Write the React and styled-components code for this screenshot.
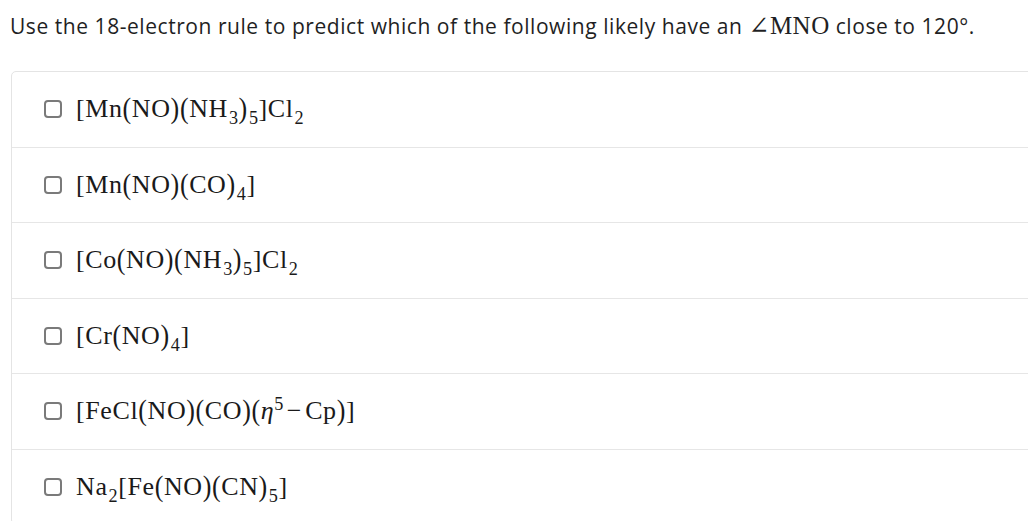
import React from "react";
import styled, { createGlobalStyle } from "styled-components";

const Global = createGlobalStyle`
  html, body { margin: 0; padding: 0; background: #fff; overflow: hidden; }
  body { font-family: "Open Sans", "Noto Sans", sans-serif; color: #1f1f24; }
`;

const Page = styled.div`
  padding: 11px 0 0 10px;
  width: 1060px;
`;

const Question = styled.div`
  font-size: 21px;
  line-height: 30px;
  letter-spacing: 0.55px;
  color: #1f1f24;
  margin: 0 0 30px 0;
  white-space: nowrap;
`;

const InlineMath = styled.span`
  font-family: "Liberation Serif", "DejaVu Serif", serif;
  font-size: 25px;
  letter-spacing: 0.5px;
`;

const Card = styled.div`
  margin-left: 1px;
  width: 1040px;
  border: 1px solid #e4e4e4;
  border-radius: 5px;
  display: flex;
  flex-direction: column;
`;

const Row = styled.label`
  display: flex;
  align-items: center;
  gap: 14px;
  height: 74.5px;
  padding-left: 32px;
  border-top: ${(p) => (p.$first ? "none" : "1px solid #e6e6e6")};
  cursor: pointer;
`;

const Box = styled.span`
  width: 14px;
  height: 14px;
  border: 2px solid #7a7a7a;
  border-radius: 4px;
  flex: none;
`;

const Formula = styled.span`
  font-family: "Liberation Serif", "DejaVu Serif", serif;
  font-size: 26px;
  letter-spacing: 0.6px;
  color: #1a1a1a;
  line-height: 1;
  white-space: nowrap;
`;

const Paren = styled.span`
  display: inline-block;
  transform: scaleY(1.12);
`;

const Sub = styled.sub`
  font-size: 0.7em;
  vertical-align: -0.38em;
  line-height: 0;
  margin-left: 1px;
`;

const Sup = styled.sup`
  font-size: 0.7em;
  vertical-align: 0.5em;
  line-height: 0;
`;

const It = styled.i`
  font-style: italic;
`;

const Minus = styled.span`
  margin: 0 3px;
`;

const L = () => <Paren>(</Paren>;
const R = () => <Paren>)</Paren>;

const options = [
  <>[Mn<L />NO<R /><L />NH<Sub>3</Sub><R /><Sub>5</Sub>]Cl<Sub>2</Sub></>,
  <>[Mn<L />NO<R /><L />CO<R /><Sub>4</Sub>]</>,
  <>[Co<L />NO<R /><L />NH<Sub>3</Sub><R /><Sub>5</Sub>]Cl<Sub>2</Sub></>,
  <>[Cr<L />NO<R /><Sub>4</Sub>]</>,
  <>[FeCl<L />NO<R /><L />CO<R /><L /><It>η</It><Sup>5</Sup><Minus>−</Minus>Cp<R />]</>,
  <>Na<Sub>2</Sub>[Fe<L />NO<R /><L />CN<R /><Sub>5</Sub>]</>,
];

export default function App() {
  return (
    <>
      <Global />
      <Page>
        <Question>
          Use the 18-electron rule to predict which of the following likely have an{" "}
          <InlineMath>∠MNO</InlineMath> close to 120°.
        </Question>
        <Card>
          {options.map((o, i) => (
            <Row key={i} $first={i === 0}>
              <Box />
              <Formula>{o}</Formula>
            </Row>
          ))}
        </Card>
      </Page>
    </>
  );
}
